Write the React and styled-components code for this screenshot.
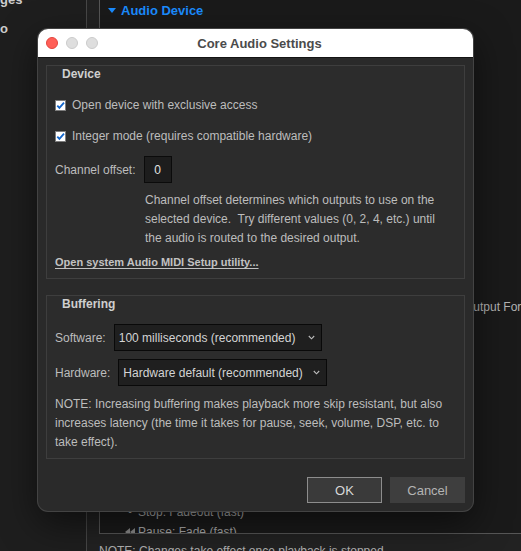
import React from 'react';
import styled, { createGlobalStyle } from 'styled-components';

const GlobalStyle = createGlobalStyle`
  html, body {
    margin: 0;
    padding: 0;
    background: #1e1e1e;
  }
  body {
    font-family: "Liberation Sans", Arial, Helvetica, sans-serif;
    -webkit-font-smoothing: antialiased;
  }
  * { box-sizing: border-box; }
`;

/* ---------- the preferences window behind the dialog ---------- */

const Screen = styled.div`
  position: relative;
  display: flex;
  width: 521px;
  height: 551px;
  overflow: hidden;
  background: #1e1e1e;
`;

const Sidebar = styled.div`
  width: 86px;
  flex-shrink: 0;
  display: flex;
  flex-direction: column;
  gap: 14px;
  margin-top: -8px;
`;

const SidebarItem = styled.div`
  font-size: 13px;
  font-weight: bold;
  line-height: 15px;
  color: #cdcdcd;
`;

const Main = styled.div`
  flex: 1;
  display: flex;
  flex-direction: column;
  border-left: 1px solid #474747;
  background: #222222;
  padding-left: 12px;
`;

const Panel = styled.div`
  height: 534px;
  flex-shrink: 0;
  display: flex;
  flex-direction: column;
  overflow: hidden;
  background: #1a1a1a;
  border-left: 1px solid #565656;
  border-bottom: 1px solid #565656;

  & > * { flex-shrink: 0; }
`;

const SectionHeading = styled.div`
  display: flex;
  align-items: center;
  gap: 5px;
  height: 21px;
  padding-left: 8px;
  font-size: 13px;
  font-weight: bold;
  color: #1a8cff;
`;

const OutputRow = styled.div`
  margin-top: 279px;
  padding-left: 364px;
  font-size: 12px;
  line-height: 15px;
  color: #b3b3b3;
  white-space: nowrap;
`;

const ListItem = styled.div`
  display: flex;
  align-items: center;
  height: 20px;
  margin-top: ${p => p.$top || 0}px;
  padding-left: 22px;
  font-size: 12px;
  color: #a9a9a9;
  white-space: nowrap;
`;

const ListMark = styled.span`
  width: 16px;
  display: flex;
  justify-content: center;
  color: #a9a9a9;
`;

const FootNote = styled.div`
  margin-top: 10px;
  font-size: 12px;
  line-height: 15px;
  color: #b0b0b0;
  white-space: nowrap;
`;

/* ---------- the dialog window ---------- */

const Dialog = styled.div`
  position: absolute;
  left: 38px;
  top: 29px;
  width: 435px;
  display: flex;
  flex-direction: column;
  border-radius: 10px;
  overflow: hidden;
  background: #2a2a2a;
  box-shadow: 0 0 0 1px #434343, 0 12px 36px rgba(0, 0, 0, 0.55);
`;

const TitleBar = styled.div`
  display: grid;
  grid-template-columns: 1fr auto 1fr;
  align-items: center;
  height: 29px;
  padding-left: 8px;
  background: #ffffff;
  border-bottom: 1px solid #141414;
`;

const Lights = styled.div`
  display: flex;
  gap: 8px;
`;

const Light = styled.span`
  width: 12px;
  height: 12px;
  border-radius: 50%;
  background: ${p => (p.$red ? '#ff5f57' : '#dedede')};
  border: 1px solid ${p => (p.$red ? '#e2463f' : '#cbcbcb')};
`;

const Title = styled.div`
  font-size: 13px;
  font-weight: bold;
  color: #4b4b4b;
`;

const Body = styled.div`
  display: flex;
  flex-direction: column;
  gap: 16px;
  padding: 7px 8px 8px 8px;
`;

const Group = styled.div`
  display: flex;
  flex-direction: column;
  align-items: flex-start;
  padding: 0 8px ${p => p.$bottom}px 8px;
  background: #2c2c2c;
  border: 1px solid #3e3e3e;
  font-size: 12px;
  color: #bdbdbd;
`;

const GroupTitle = styled.div`
  padding-left: 7px;
  font-size: 12px;
  font-weight: bold;
  line-height: 17px;
  color: #cfcfcf;
`;

const CheckRow = styled.label`
  display: flex;
  align-items: center;
  gap: 6px;
  height: 20px;
  margin-top: ${p => p.$top}px;
`;

const ChannelRow = styled.div`
  display: flex;
  align-items: center;
  gap: 8px;
  margin-top: 10px;
`;

const NumberBox = styled.div`
  width: 28px;
  height: 27px;
  display: flex;
  align-items: center;
  justify-content: center;
  background: #1d1d1d;
  border: 1px solid #0b0b0b;
  color: #e2e2e2;
`;

const Para = styled.p`
  margin: ${p => p.$top}px 0 0 ${p => p.$indent || 0}px;
  line-height: 19px;
  white-space: pre;
`;

const Link = styled.a`
  margin-top: 7px;
  font-size: 11px;
  font-weight: bold;
  line-height: 14px;
  color: #c2c2c2;
  text-decoration: underline;
  text-underline-offset: 2px;
`;

const SelectRow = styled.div`
  display: flex;
  align-items: center;
  gap: 8px;
  margin-top: ${p => p.$top}px;
`;

const Select = styled.div`
  width: ${p => p.$width}px;
  height: 27px;
  display: flex;
  align-items: center;
  justify-content: space-between;
  padding: 0 6px 0 4px;
  background: #1f1f1f;
  border: 1px solid #090909;
  color: #d4d4d4;
  white-space: nowrap;
`;

const Footer = styled.div`
  display: flex;
  justify-content: flex-end;
  gap: 8px;
  margin-top: 2px;
`;

const Button = styled.button`
  width: 75px;
  height: 26px;
  padding: 0;
  font-family: inherit;
  font-size: 13px;
  background: ${p => (p.$primary ? '#3a3a3a' : '#3e3e3e')};
  color: ${p => (p.$primary ? '#d8d8d8' : '#b4b4b4')};
  border: 1px solid ${p => (p.$primary ? '#8d8d8d' : 'transparent')};
`;

const Check = () => (
  <svg width="11" height="11" viewBox="0 0 11 11">
    <rect x="0.5" y="0.5" width="10" height="10" fill="#ffffff" stroke="#7d7d7d" />
    <path d="M2.3 5.6 L4.4 7.8 L9 2.6" fill="none" stroke="#1366cc" strokeWidth="1.8" />
  </svg>
);

const Chevron = () => (
  <svg width="7" height="5" viewBox="0 0 7 5">
    <path d="M0.8 1 L3.5 3.8 L6.2 1" fill="none" stroke="#bdbdbd" strokeWidth="1.1" />
  </svg>
);

const Disclosure = () => (
  <svg width="8" height="5" viewBox="0 0 8 5">
    <polygon points="0,0 8,0 4,5" fill="#1a8cff" />
  </svg>
);

const Rewind = () => (
  <svg width="10" height="8" viewBox="0 0 10 8">
    <polygon points="0,4 5,0 5,8" fill="#8a8a8a" />
    <polygon points="5,4 10,0 10,8" fill="#8a8a8a" />
  </svg>
);

export default function App() {
  return (
    <>
      <GlobalStyle />
      <Screen>
        <Sidebar>
          <SidebarItem>ges</SidebarItem>
          <SidebarItem>o</SidebarItem>
        </Sidebar>
        <Main>
          <Panel>
            <SectionHeading>
              <Disclosure />
              Audio Device
            </SectionHeading>
            <OutputRow>Output Format:</OutputRow>
            <ListItem $top={187}>
              <ListMark>•</ListMark>Stop: Fadeout (fast)
            </ListItem>
            <ListItem>
              <ListMark><Rewind /></ListMark>Pause: Fade (fast)
            </ListItem>
          </Panel>
          <FootNote>NOTE: Changes take effect once playback is stopped.</FootNote>
        </Main>

        <Dialog>
          <TitleBar>
            <Lights>
              <Light $red />
              <Light />
              <Light />
            </Lights>
            <Title>Core Audio Settings</Title>
            <span />
          </TitleBar>
          <Body>
            <Group $bottom={9}>
              <GroupTitle>Device</GroupTitle>
              <CheckRow $top={12}>
                <Check />
                Open device with exclusive access
              </CheckRow>
              <CheckRow $top={11}>
                <Check />
                Integer mode (requires compatible hardware)
              </CheckRow>
              <ChannelRow>
                Channel offset:
                <NumberBox>0</NumberBox>
              </ChannelRow>
              <Para $top={8} $indent={90}>
                {'Channel offset determines which outputs to use on the\nselected device.  Try different values (0, 2, 4, etc.) until\nthe audio is routed to the desired output.'}
              </Para>
              <Link>Open system Audio MIDI Setup utility...</Link>
            </Group>

            <Group $bottom={6}>
              <GroupTitle>Buffering</GroupTitle>
              <SelectRow $top={11}>
                Software:
                <Select $width={208}>
                  100 milliseconds (recommended)
                  <Chevron />
                </Select>
              </SelectRow>
              <SelectRow $top={8}>
                Hardware:
                <Select $width={209}>
                  Hardware default (recommended)
                  <Chevron />
                </Select>
              </SelectRow>
              <Para $top={9}>
                {'NOTE: Increasing buffering makes playback more skip resistant, but also\nincreases latency (the time it takes for pause, seek, volume, DSP, etc. to\ntake effect).'}
              </Para>
            </Group>

            <Footer>
              <Button $primary>OK</Button>
              <Button>Cancel</Button>
            </Footer>
          </Body>
        </Dialog>
      </Screen>
    </>
  );
}
